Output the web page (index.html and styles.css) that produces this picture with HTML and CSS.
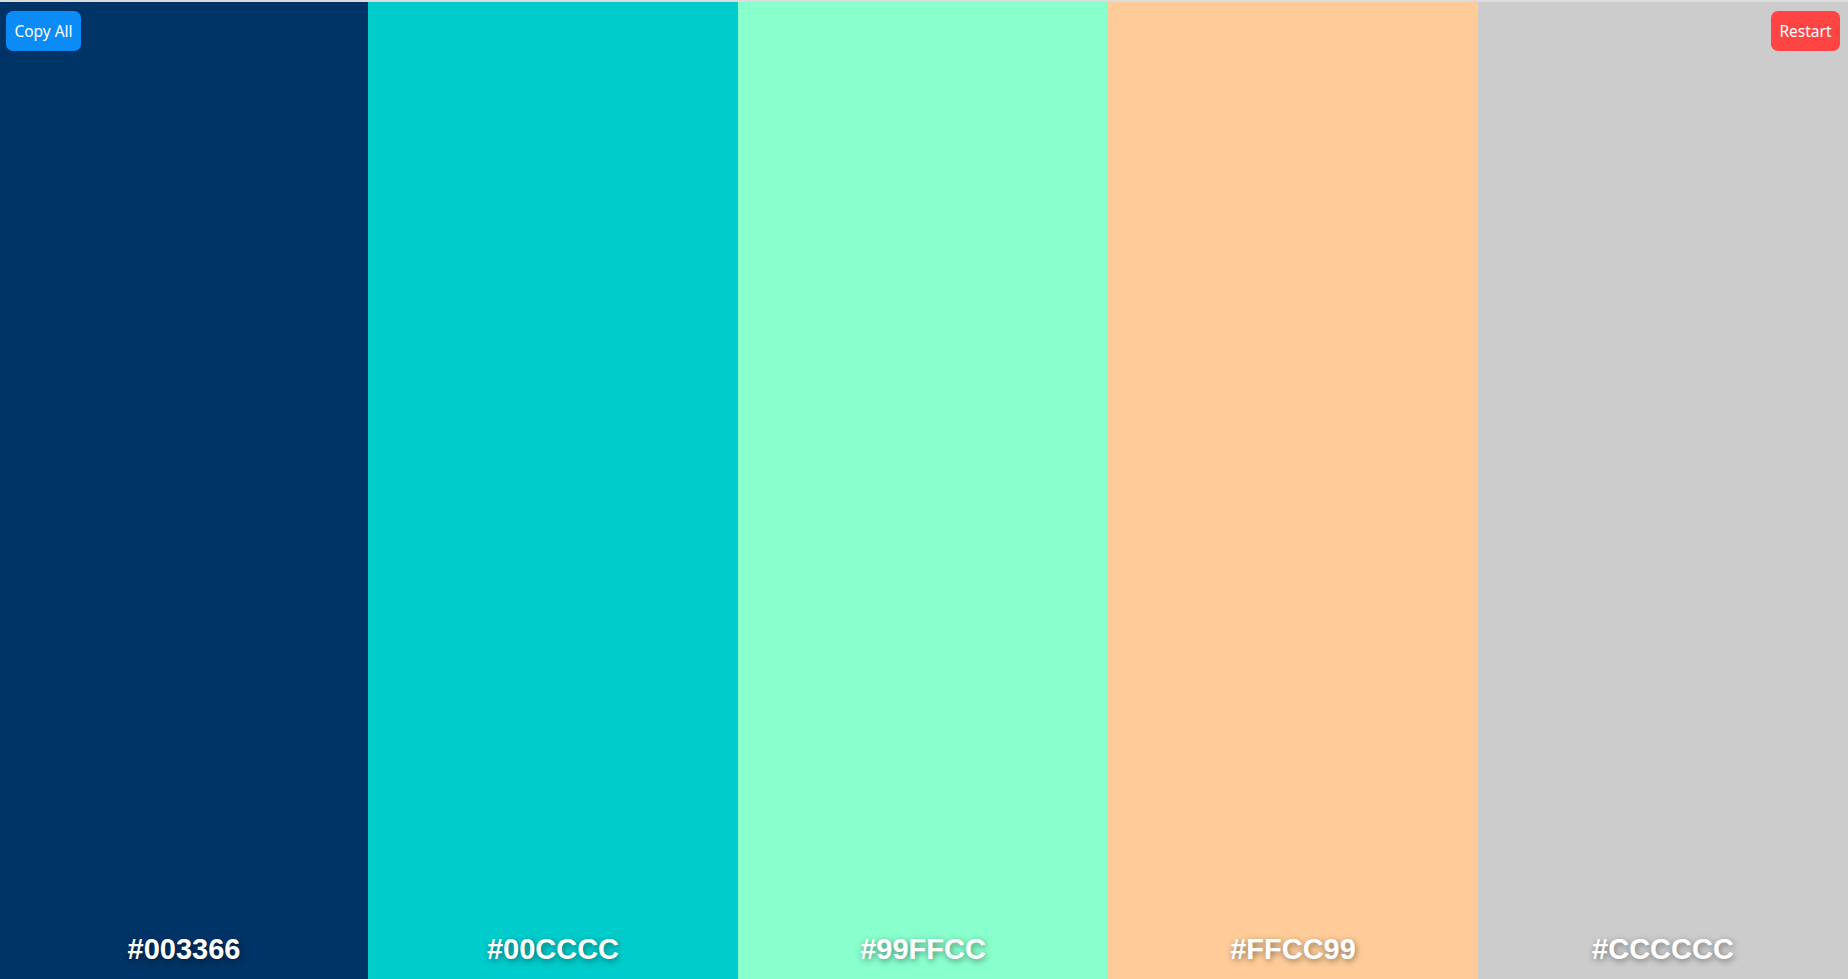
FILE: index.html
```html
<!DOCTYPE html>
<html lang="en">
<head>
<meta charset="utf-8">
<title>Palette</title>
<link rel="stylesheet" href="styles.css">
</head>
<body>
<main class="palette">
  <section class="swatch swatch-1"><span class="hex">#003366</span></section>
  <section class="swatch swatch-2"><span class="hex">#00CCCC</span></section>
  <section class="swatch swatch-3"><span class="hex">#99FFCC</span></section>
  <section class="swatch swatch-4"><span class="hex">#FFCC99</span></section>
  <section class="swatch swatch-5"><span class="hex">#CCCCCC</span></section>
</main>
<button class="btn btn-copy">Copy All</button>
<button class="btn btn-restart">Restart</button>
</body>
</html>
```

FILE: styles.css
```css
html, body {
  margin: 0;
  padding: 0;
  height: 100%;
}
body {
  background: #dcdcdc;
  padding-top: 2px;
  box-sizing: border-box;
  overflow: hidden;
}
.palette {
  display: flex;
  height: calc(100vh - 2px);
}
.swatch {
  flex: 1 1 0;
  display: flex;
  align-items: flex-end;
  justify-content: center;
  padding-bottom: 13px;
  box-sizing: border-box;
}
.swatch-1 { background: #003366; flex: 0 0 368px; }
.swatch-2 { background: #00cccc; }
.swatch-3 { background: #88ffcc; }
.swatch-4 { background: #ffcc99; }
.swatch-5 { background: #cccccc; }
.hex {
  font-family: "Liberation Sans", Arial, sans-serif;
  font-weight: bold;
  font-size: 29px;
  color: #ffffff;
  text-shadow: 1px 2px 6px rgba(0, 0, 0, 0.45);
}
.btn {
  position: absolute;
  top: 11px;
  height: 40px;
  padding: 0 8px;
  border: none;
  border-radius: 7px;
  color: #ffffff;
  font-family: "Noto Sans", "Open Sans", sans-serif;
  font-size: 15.5px;
  cursor: pointer;
}
.btn-copy {
  left: 6px;
  width: 75px;
  background: #0b8bf5;
}
.btn-restart {
  right: 8px;
  width: 69px;
  background: #ff4444;
}
```
